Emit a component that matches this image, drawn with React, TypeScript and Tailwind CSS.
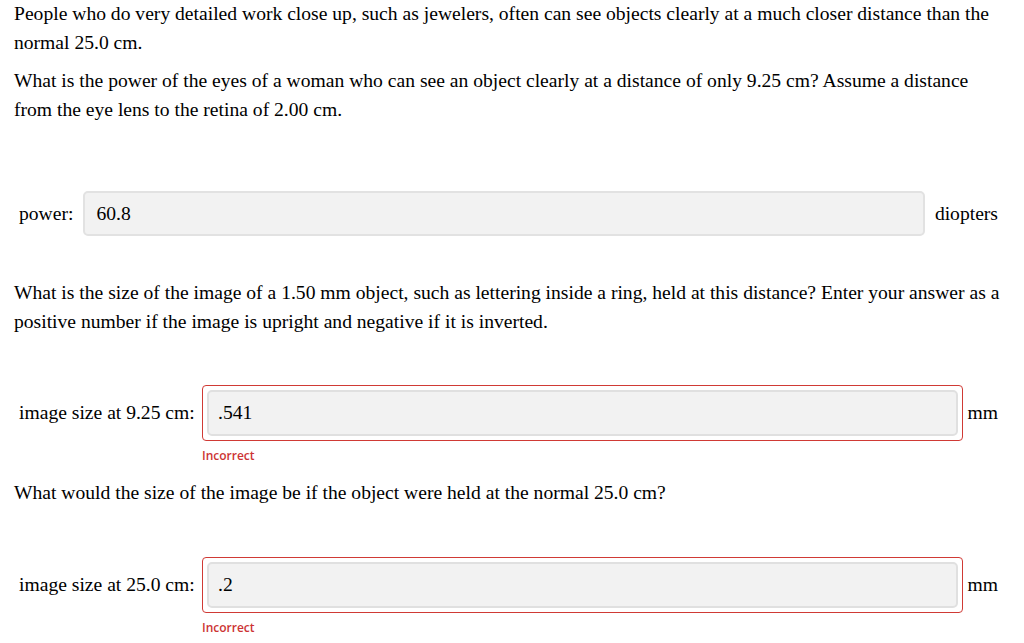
import React from "react";

const serif = { fontFamily: '"Liberation Serif", "Times New Roman", serif' };

function Para({ children, className = "" }: { children: React.ReactNode; className?: string }) {
  return (
    <p className={`pl-[14px] pr-[20px] text-[19.6px] leading-[28.5px] text-black ${className}`}>{children}</p>
  );
}

function PlainRow({ label, value, unit, className = "" }: { label: string; value: string; unit: string; className?: string }) {
  return (
    <div className={`flex items-center pl-[19px] pr-[26px] text-[19.6px] text-black ${className}`}>
      <span className="whitespace-nowrap">{label}</span>
      <div className="ml-[10px] flex h-[45px] flex-1 items-center rounded-[5px] border-2 border-[#e2e2e2] bg-[#f2f2f2] pl-[11px]">
        {value}
      </div>
      <span className="ml-[10px] whitespace-nowrap">{unit}</span>
    </div>
  );
}

function WrongRow({ label, value, unit, className = "" }: { label: string; value: string; unit: string; className?: string }) {
  return (
    <div className={`pl-[19px] pr-[26px] text-[19.6px] text-black ${className}`}>
      <div className="flex items-center">
        <span className="w-[183px] whitespace-nowrap">{label}</span>
        <div className="flex-1 rounded-[4px] border border-[#d03a35] p-[4px]">
          <div className="flex h-[46px] items-center rounded-[5px] border-2 border-[#e0e0e0] bg-[#f2f2f2] pl-[9px]">
            {value}
          </div>
        </div>
        <span className="ml-[5px] whitespace-nowrap">{unit}</span>
      </div>
      <div
        className="ml-[183px] mt-[7px] text-[12px] font-semibold leading-[16px] text-[#cc3333]"
        style={{ fontFamily: '"Open Sans", "Noto Sans", sans-serif' }}
      >
        Incorrect
      </div>
    </div>
  );
}

export default function App() {
  return (
    <div className="h-[643px] w-[1024px] overflow-hidden bg-white" style={serif}>
      <Para>
        People who do very detailed work close up, such as jewelers, often can see objects clearly at a much closer distance than the normal 25.0 cm.
      </Para>
      <Para className="mt-[10px]">
        What is the power of the eyes of a woman who can see an object clearly at a distance of only 9.25 cm? Assume a distance from the eye lens to the retina of 2.00 cm.
      </Para>
      <PlainRow label="power:" value="60.8" unit="diopters" className="mt-[67px]" />
      <Para className="mt-[43px]">
        What is the size of the image of a 1.50 mm object, such as lettering inside a ring, held at this distance? Enter your answer as a positive number if the image is upright and negative if it is inverted.
      </Para>
      <WrongRow label="image size at 9.25 cm:" value=".541" unit="mm" className="mt-[49px]" />
      <Para className="mt-[15px]">What would the size of the image be if the object were held at the normal 25.0 cm?</Para>
      <WrongRow label="image size at 25.0 cm:" value=".2" unit="mm" className="mt-[49px]" />
    </div>
  );
}
